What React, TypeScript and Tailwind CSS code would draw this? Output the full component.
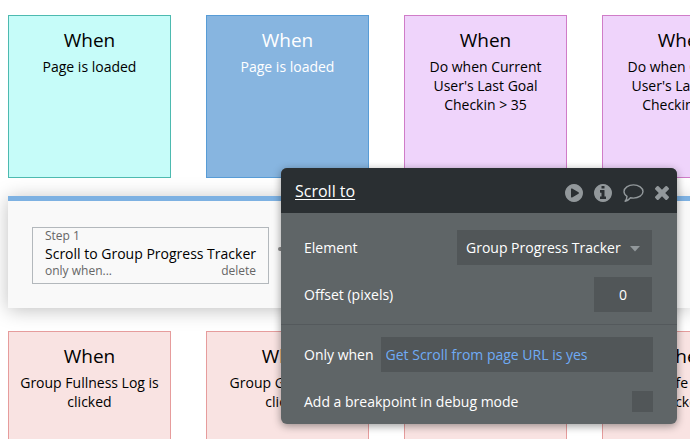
import type { ReactNode } from 'react';

type Tone = 'teal' | 'blue' | 'purple' | 'red';

interface WorkflowEvent {
  id: string;
  tone: Tone;
  label: string;
}

const tones: Record<Tone, string> = {
  teal: 'bg-[#c6fcf9] border-[#4dbab0] text-black',
  blue: 'bg-[#87b5e0] border-[#589cd6] text-white',
  purple: 'bg-[#efd4fb] border-[#d07cc8] text-black',
  red: 'bg-[#f9e3e2] border-[#e69c9c] text-black',
};

const topEvents: WorkflowEvent[] = [
  { id: 'load-1', tone: 'teal', label: 'Page is loaded' },
  { id: 'load-2', tone: 'blue', label: 'Page is loaded' },
  { id: 'checkin-1', tone: 'purple', label: "Do when Current User's Last Goal Checkin > 35" },
  { id: 'checkin-2', tone: 'purple', label: "Do when Current User's Last Goal Checkin > 35" },
];

const bottomEvents: WorkflowEvent[] = [
  { id: 'fullness', tone: 'red', label: 'Group Fullness Log is clicked' },
  { id: 'goal', tone: 'red', label: 'Group Goal Log is clicked' },
  { id: 'blank', tone: 'red', label: '' },
  { id: 'life', tone: 'red', label: 'Group Life Habits is clicked' },
];

function EventCard({ event }: { event: WorkflowEvent }) {
  return (
    <button
      type="button"
      className={`flex h-[163px] w-[163px] shrink-0 flex-col items-center border px-2 pt-[11px] text-center ${tones[event.tone]}`}
    >
      <span className="text-[19px] leading-[26px]">When</span>
      <span className="mt-1 max-w-36 text-sm leading-[19px]">{event.label}</span>
    </button>
  );
}

function EventRow({ events }: { events: WorkflowEvent[] }) {
  return (
    <div className="flex gap-[35px] pl-2">
      {events.map((e) => (
        <EventCard key={e.id} event={e} />
      ))}
    </div>
  );
}

function IconButton({ label, children }: { label: string; children: ReactNode }) {
  return (
    <button type="button" aria-label={label} className="flex text-[#92989b]">
      {children}
    </button>
  );
}

function PropertyEditor() {
  return (
    <section className="absolute left-[281px] top-[168px] w-[396px] overflow-hidden rounded-md bg-[#5f6567] text-sm text-white shadow-[0_2px_8px_rgba(0,0,0,0.4)]">
      <header className="flex h-[45px] items-center bg-[#2a2f32] pl-3.5 pr-2">
        <h2 className="mr-auto text-base underline underline-offset-2">Scroll to</h2>
        <div className="flex items-center gap-[11px] pt-1">
          <IconButton label="Run">
            <svg viewBox="128 128 1536 1536" className="size-[18px]" fill="currentColor">
              <path d="M896 128q209 0 385.500 103t279.500 279.500 103 385.500-103 385.500-279.500 279.500-385.500 103-385.500-103-279.500-279.500-103-385.500 103-385.500 279.500-279.500 385.500-103zm384 823q32-18 32-55t-32-55l-544-320q-31-19-64-1-32 19-32 56v640q0 37 32 56 16 8 32 8 17 0 32-9z" />
            </svg>
          </IconButton>
          <IconButton label="Info">
            <svg viewBox="128 128 1536 1536" className="size-[18px]" fill="currentColor">
              <path d="M1152 1376v-160q0-14-9-23t-23-9h-96v-512q0-14-9-23t-23-9h-320q-14 0-23 9t-9 23v160q0 14 9 23t23 9h96v320h-96q-14 0-23 9t-9 23v160q0 14 9 23t23 9h448q14 0 23-9t9-23zm-128-896v-160q0-14-9-23t-23-9h-192q-14 0-23 9t-9 23v160q0 14 9 23t23 9h192q14 0 23-9t9-23zm640 416q0 209-103 385.500t-279.500 279.500-385.500 103-385.500-103-279.500-279.500-103-385.500 103-385.500 279.500-279.500 385.500-103 385.500 103 279.500 279.500 103 385.500z" />
            </svg>
          </IconButton>
          <IconButton label="Comment">
            <svg viewBox="0 0 21 18" className="h-[18px] w-[21px]" fill="none" stroke="currentColor" strokeWidth="1.4" strokeLinejoin="round">
              <path d="M10.500 0.900C15.700 0.900 20 3.900 20 7.500S15.700 14.100 10.500 14.100C9.400 14.100 8.400 14 7.500 13.800C6.100 15.600 4.300 16.800 2.100 17.200C3.300 15.900 3.900 14.300 4 12.400C2.200 11.200 1 9.500 1 7.500C1 3.900 5.300 0.900 10.500 0.900Z" />
            </svg>
          </IconButton>
          <IconButton label="Close">
            <svg viewBox="110 366 1188 1188" className="size-3.5" fill="currentColor">
              <path d="M1298 1322q0 40-28 68l-136 136q-28 28-68 28t-68-28l-294-294-294 294q-28 28-68 28t-68-28l-136-136q-28-28-28-68t28-68l294-294-294-294q-28-28-28-68t28-68l136-136q28-28 68-28t68 28l294 294 294-294q28-28 68-28t68 28l136 136q28 28 28 68t-28 68l-294 294 294 294q28 28 28 68z" />
            </svg>
          </IconButton>
        </div>
      </header>

      <div className="flex flex-col gap-3 pb-3 pl-[23px] pr-[25px] pt-[17px]">
        <div className="flex items-center justify-between">
          <label htmlFor="element">Element</label>
          <div className="relative">
            <select id="element" className="block h-[35px] w-[195px] appearance-none bg-[#515658] pl-[9px] pr-7">
              <option>Group Progress Tracker</option>
            </select>
            <svg viewBox="0 0 10 6" className="pointer-events-none absolute right-3 top-4 h-1.5 w-2.5" fill="#92989b">
              <path d="M0 0h10L5 5.500z" />
            </svg>
          </div>
        </div>
        <div className="flex items-center justify-between">
          <label htmlFor="offset">Offset (pixels)</label>
          <input id="offset" type="text" defaultValue="0" className="h-[35px] w-[58px] bg-[#515658] text-center" />
        </div>
      </div>

      <div className="flex flex-col gap-[19px] border-t border-[#54595c] pb-3 pl-[23px] pr-6 pt-3">
        <div className="flex items-center gap-[7px]">
          <label htmlFor="condition" className="shrink-0">Only when</label>
          <input
            id="condition"
            type="text"
            defaultValue="Get Scroll from page URL is yes"
            className="h-[35px] min-w-0 flex-1 bg-[#515658] px-[5px] text-[#6fabf5]"
          />
        </div>
        <div className="flex h-[21px] items-center justify-between">
          <label htmlFor="breakpoint">Add a breakpoint in debug mode</label>
          <input id="breakpoint" type="checkbox" className="size-[21px] appearance-none bg-[#515658]" />
        </div>
      </div>
    </section>
  );
}

export default function App() {
  return (
    <main className="relative h-screen overflow-hidden bg-white pt-[15px] font-['Open_Sans','Noto_Sans',sans-serif]">
      <EventRow events={topEvents} />

      {/* Actions of the selected event */}
      <div className="mb-[23px] ml-2 mt-[18px] flex items-start gap-[9px] border-t-[5px] border-[#7db1e2] bg-[#f9f9f9] px-6 pb-6 pt-[26px] shadow-[0_2px_18px_rgba(0,0,0,0.25)]">
        <div className="flex w-[237px] flex-col border border-[#b3b8bc] px-3 pb-1 text-xs leading-4 text-[#666]">
          <span>Step 1</span>
          <button type="button" className="whitespace-nowrap text-left text-sm leading-[19px] text-black">
            Scroll to Group Progress Tracker
          </button>
          <div className="flex justify-between">
            <button type="button">only when...</button>
            <button type="button">delete</button>
          </div>
        </div>
        <span className="mt-5 h-1 w-8 rounded-full bg-[#8c8c8c]" />
      </div>

      <EventRow events={bottomEvents} />
      <PropertyEditor />
    </main>
  );
}
